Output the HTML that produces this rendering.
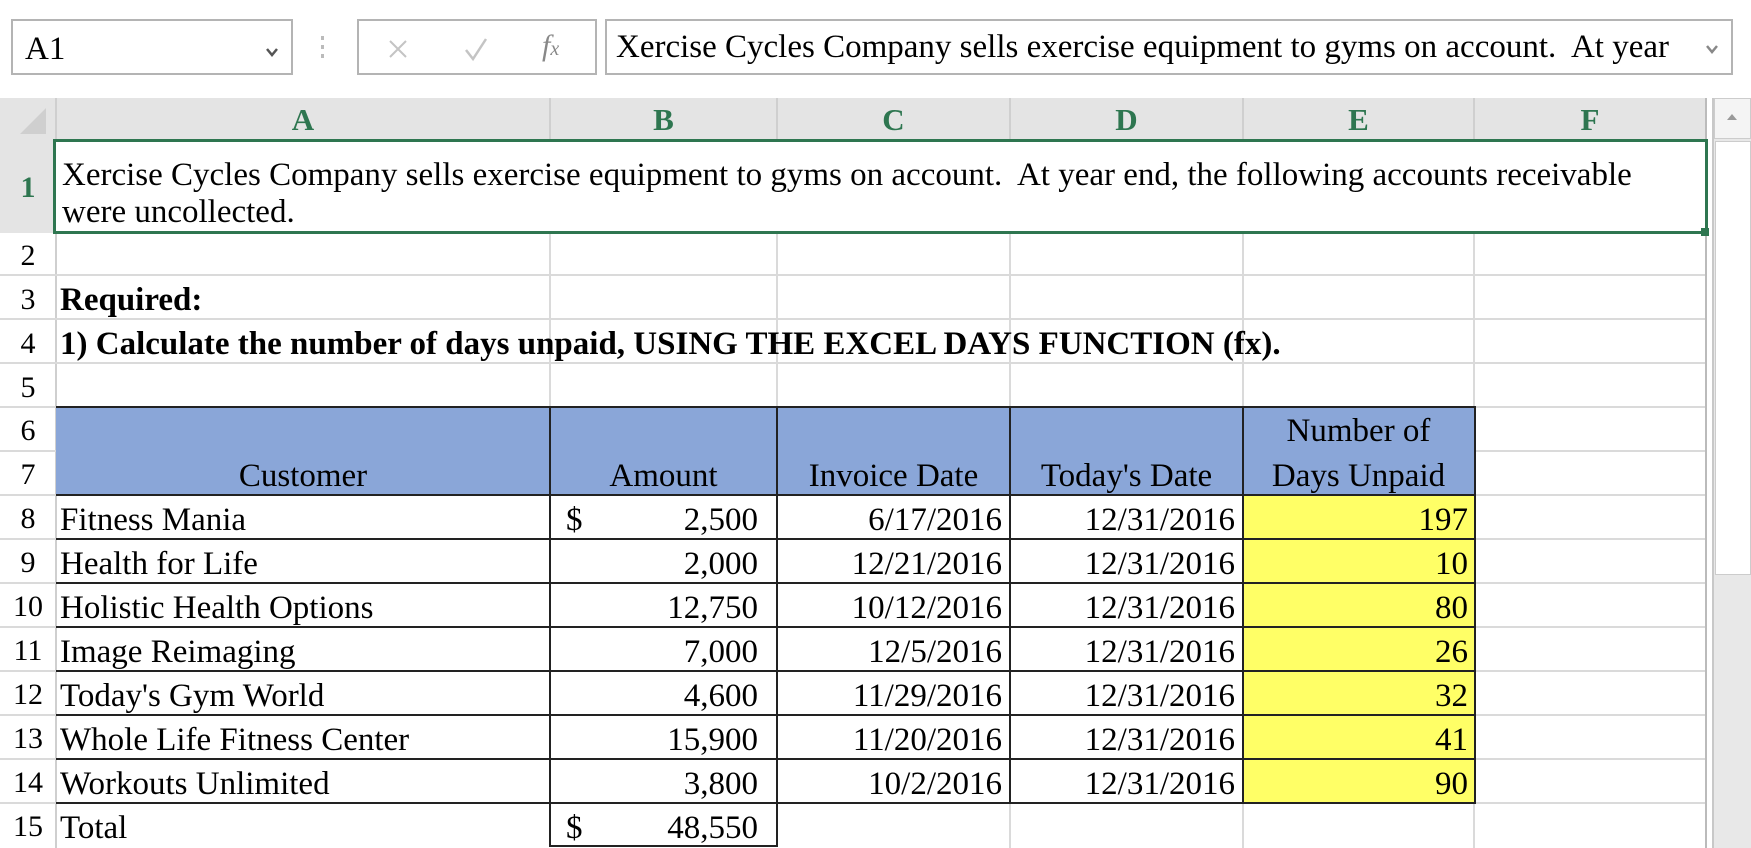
<!DOCTYPE html>
<html><head><meta charset="utf-8"><style>
*{margin:0;padding:0;box-sizing:border-box}
body{width:1751px;height:848px;background:#fff;position:relative;overflow:hidden;font-family:"Liberation Serif",serif;color:#000}
.a{position:absolute}
.t{position:absolute;font-size:33px;white-space:nowrap;line-height:1;margin-top:3px}
.hl{position:absolute;height:2px;background:#dadada}
.vl{position:absolute;width:2px;background:#dadada}
.bh{position:absolute;height:2px;background:#222}
.bv{position:absolute;width:2px;background:#222}
.col{position:absolute;top:98px;height:41px;font-weight:bold;color:#2e7650;font-size:31px;text-align:center;line-height:43px}
.rn{position:absolute;left:0;width:56px;text-align:center;font-size:30px;line-height:1;margin-top:3px}
</style></head><body>
<!-- formula bar -->
<div class="a" style="left:11px;top:19px;width:282px;height:56px;border:2px solid #b4b4b4"></div>
<div class="t" style="left:25px;top:30px;font-size:33px">A1</div>
<svg class="a" style="left:265px;top:46px" width="14" height="12"><path d="M2 3 L7 9 L12 3" stroke="#555" stroke-width="2.5" fill="none"/></svg>
<div class="a" style="left:321px;top:36px;width:3px;height:4px;background:#bbb"></div>
<div class="a" style="left:321px;top:45px;width:3px;height:4px;background:#bbb"></div>
<div class="a" style="left:321px;top:54px;width:3px;height:4px;background:#bbb"></div>
<div class="a" style="left:357px;top:19px;width:240px;height:56px;border:2px solid #b4b4b4"></div>
<svg class="a" style="left:386px;top:37px" width="24" height="24"><path d="M4 4 L20 20 M20 4 L4 20" stroke="#c4c4c4" stroke-width="2" fill="none"/></svg>
<svg class="a" style="left:462px;top:35px" width="28" height="28"><path d="M4 15 L11 24 L24 4" stroke="#c4c4c4" stroke-width="2.5" fill="none"/></svg>
<div class="t" style="left:542px;top:28px;font-style:italic;color:#888;font-size:30px">f<span style="font-size:20px">x</span></div>
<div class="a" style="left:605px;top:19px;width:1128px;height:56px;border:2px solid #b4b4b4"></div>
<div class="t" style="left:616px;top:28px">Xercise Cycles Company sells exercise equipment to gyms on account.&nbsp; At year</div>
<svg class="a" style="left:1705px;top:43px" width="14" height="12"><path d="M2 3 L7 9 L12 3" stroke="#888" stroke-width="2.5" fill="none"/></svg>

<!-- headers -->
<div class="a" style="left:0;top:98px;width:1706px;height:41px;background:#e4e4e4"></div>
<svg class="a" style="left:20px;top:108px" width="28" height="26"><path d="M26 0 L26 26 L0 26 Z" fill="#cfcfcf"/></svg>
<div class="a" style="left:0;top:139px;width:56px;height:94px;background:#e4e4e4"></div>
<div class="a" style="left:0;top:233px;width:56px;height:615px;background:#fff"></div>
<div class="vl" style="left:55px;top:98px;height:750px;background:#cfcfcf"></div>
<div class="col" style="left:56px;width:494px">A</div>
<div class="col" style="left:550px;width:227px">B</div>
<div class="col" style="left:777px;width:233px">C</div>
<div class="col" style="left:1010px;width:233px">D</div>
<div class="col" style="left:1243px;width:231px">E</div>
<div class="col" style="left:1474px;width:232px">F</div>
<div class="vl" style="left:549px;top:98px;height:41px;background:#cfcfcf"></div>
<div class="vl" style="left:776px;top:98px;height:41px;background:#cfcfcf"></div>
<div class="vl" style="left:1009px;top:98px;height:41px;background:#cfcfcf"></div>
<div class="vl" style="left:1242px;top:98px;height:41px;background:#cfcfcf"></div>
<div class="vl" style="left:1473px;top:98px;height:41px;background:#cfcfcf"></div>

<!-- grid lines -->
<div class="hl" style="left:0;top:274px;width:1706px"></div>
<div class="hl" style="left:0;top:318px;width:1706px"></div>
<div class="hl" style="left:0;top:362px;width:1706px"></div>
<div class="hl" style="left:0;top:406px;width:1706px"></div>
<div class="hl" style="left:0;top:450px;width:56px"></div><div class="hl" style="left:1474px;top:450px;width:232px"></div>
<div class="hl" style="left:0;top:494px;width:56px"></div><div class="hl" style="left:1474px;top:494px;width:232px"></div>
<div class="hl" style="left:0;top:538px;width:56px"></div><div class="hl" style="left:1474px;top:538px;width:232px"></div>
<div class="hl" style="left:0;top:582px;width:56px"></div><div class="hl" style="left:1474px;top:582px;width:232px"></div>
<div class="hl" style="left:0;top:626px;width:56px"></div><div class="hl" style="left:1474px;top:626px;width:232px"></div>
<div class="hl" style="left:0;top:670px;width:56px"></div><div class="hl" style="left:1474px;top:670px;width:232px"></div>
<div class="hl" style="left:0;top:714px;width:56px"></div><div class="hl" style="left:1474px;top:714px;width:232px"></div>
<div class="hl" style="left:0;top:758px;width:56px"></div><div class="hl" style="left:1474px;top:758px;width:232px"></div>
<div class="hl" style="left:0;top:802px;width:56px"></div><div class="hl" style="left:1474px;top:802px;width:232px"></div>
<div class="vl" style="left:549px;top:233px;height:174px"></div>
<div class="vl" style="left:776px;top:233px;height:174px"></div>
<div class="vl" style="left:1009px;top:233px;height:174px"></div>
<div class="vl" style="left:1242px;top:233px;height:174px"></div>
<div class="vl" style="left:1473px;top:233px;height:615px"></div>
<div class="vl" style="left:1009px;top:803px;height:45px"></div>
<div class="vl" style="left:1242px;top:803px;height:45px"></div>
<div class="vl" style="left:1705px;top:98px;height:750px;background:#bbb"></div>

<!-- table fills -->
<div class="a" style="left:56px;top:407px;width:1418px;height:88px;background:#8aa6d8"></div>
<div class="a" style="left:1243px;top:495px;width:231px;height:308px;background:#ffff66"></div>
<div class="bh" style="left:56px;top:406px;width:1420px"></div>
<div class="bh" style="left:56px;top:494px;width:1420px"></div>
<div class="bh" style="left:56px;top:538px;width:1420px"></div>
<div class="bh" style="left:56px;top:582px;width:1420px"></div>
<div class="bh" style="left:56px;top:626px;width:1420px"></div>
<div class="bh" style="left:56px;top:670px;width:1420px"></div>
<div class="bh" style="left:56px;top:714px;width:1420px"></div>
<div class="bh" style="left:56px;top:758px;width:1420px"></div>
<div class="bh" style="left:56px;top:802px;width:1420px"></div>
<div class="bh" style="left:549px;top:845px;width:229px"></div>
<div class="bv" style="left:549px;top:406px;height:441px"></div>
<div class="bv" style="left:776px;top:406px;height:441px"></div>
<div class="bv" style="left:1009px;top:406px;height:398px"></div>
<div class="bv" style="left:1242px;top:406px;height:398px"></div>
<div class="bv" style="left:1474px;top:406px;height:398px"></div>

<!-- row numbers -->
<div class="rn" style="top:170px;color:#2e7650;font-weight:bold">1</div>
<div class="rn" style="top:238px">2</div>
<div class="rn" style="top:282px">3</div>
<div class="rn" style="top:326px">4</div>
<div class="rn" style="top:370px">5</div>
<div class="rn" style="top:413px">6</div>
<div class="rn" style="top:457px">7</div>
<div class="rn" style="top:501px">8</div>
<div class="rn" style="top:545px">9</div>
<div class="rn" style="top:589px">10</div>
<div class="rn" style="top:633px">11</div>
<div class="rn" style="top:677px">12</div>
<div class="rn" style="top:721px">13</div>
<div class="rn" style="top:765px">14</div>
<div class="rn" style="top:809px">15</div>

<!-- row 1 -->
<div class="a" style="left:56px;top:139px;width:1650px;height:94px;background:#fff"></div>
<div class="t" style="left:62px;top:156px">Xercise Cycles Company sells exercise equipment to gyms on account.&nbsp; At year end, the following accounts receivable</div>
<div class="t" style="left:62px;top:193px">were uncollected.</div>
<div class="a" style="left:53px;top:139px;width:1655px;height:95px;border:3px solid #2e7650"></div>
<div class="a" style="left:1701px;top:228px;width:8px;height:8px;background:#2e7650"></div>

<div class="t" style="left:60px;top:281px;font-weight:bold">Required:</div>
<div class="t" style="left:60px;top:325px;font-weight:bold">1) Calculate the number of days unpaid, USING THE EXCEL DAYS FUNCTION (fx).</div>

<!-- table headers -->
<div class="t" style="left:56px;width:494px;text-align:center;top:457px">Customer</div>
<div class="t" style="left:550px;width:227px;text-align:center;top:457px">Amount</div>
<div class="t" style="left:777px;width:233px;text-align:center;top:457px">Invoice Date</div>
<div class="t" style="left:1010px;width:233px;text-align:center;top:457px">Today's Date</div>
<div class="t" style="left:1243px;width:231px;text-align:center;top:412px">Number of</div>
<div class="t" style="left:1243px;width:231px;text-align:center;top:457px">Days Unpaid</div>

<!-- data -->
<div class="t" style="left:60px;top:501px">Fitness Mania</div>
<div class="t" style="left:60px;top:545px">Health for Life</div>
<div class="t" style="left:60px;top:589px">Holistic Health Options</div>
<div class="t" style="left:60px;top:633px">Image Reimaging</div>
<div class="t" style="left:60px;top:677px">Today's Gym World</div>
<div class="t" style="left:60px;top:721px">Whole Life Fitness Center</div>
<div class="t" style="left:60px;top:765px">Workouts Unlimited</div>
<div class="t" style="left:60px;top:809px">Total</div>
<div class="t" style="left:566px;top:501px">$</div>
<div class="t" style="left:566px;top:809px">$</div>
<div class="t" style="right:993px;top:501px">2,500</div>
<div class="t" style="right:993px;top:545px">2,000</div>
<div class="t" style="right:993px;top:589px">12,750</div>
<div class="t" style="right:993px;top:633px">7,000</div>
<div class="t" style="right:993px;top:677px">4,600</div>
<div class="t" style="right:993px;top:721px">15,900</div>
<div class="t" style="right:993px;top:765px">3,800</div>
<div class="t" style="right:993px;top:809px">48,550</div>
<div class="t" style="right:749px;top:501px">6/17/2016</div>
<div class="t" style="right:749px;top:545px">12/21/2016</div>
<div class="t" style="right:749px;top:589px">10/12/2016</div>
<div class="t" style="right:749px;top:633px">12/5/2016</div>
<div class="t" style="right:749px;top:677px">11/29/2016</div>
<div class="t" style="right:749px;top:721px">11/20/2016</div>
<div class="t" style="right:749px;top:765px">10/2/2016</div>
<div class="t" style="right:516px;top:501px">12/31/2016</div>
<div class="t" style="right:516px;top:545px">12/31/2016</div>
<div class="t" style="right:516px;top:589px">12/31/2016</div>
<div class="t" style="right:516px;top:633px">12/31/2016</div>
<div class="t" style="right:516px;top:677px">12/31/2016</div>
<div class="t" style="right:516px;top:721px">12/31/2016</div>
<div class="t" style="right:516px;top:765px">12/31/2016</div>
<div class="t" style="right:283px;top:501px">197</div>
<div class="t" style="right:283px;top:545px">10</div>
<div class="t" style="right:283px;top:589px">80</div>
<div class="t" style="right:283px;top:633px">26</div>
<div class="t" style="right:283px;top:677px">32</div>
<div class="t" style="right:283px;top:721px">41</div>
<div class="t" style="right:283px;top:765px">90</div>

<!-- scrollbar -->
<div class="a" style="left:1712px;top:98px;width:39px;height:750px;background:#e8e8e8;border-left:2px solid #c8c8c8"></div>
<div class="a" style="left:1714px;top:98px;width:37px;height:41px;background:#f4f4f4;border:1px solid #ccc"></div>
<svg class="a" style="left:1726px;top:112px" width="12" height="10"><path d="M1 8 L6 2 L11 8 Z" fill="#999"/></svg>
<div class="a" style="left:1715px;top:141px;width:36px;height:434px;background:#fff;border:1px solid #ccc"></div>
</body></html>
